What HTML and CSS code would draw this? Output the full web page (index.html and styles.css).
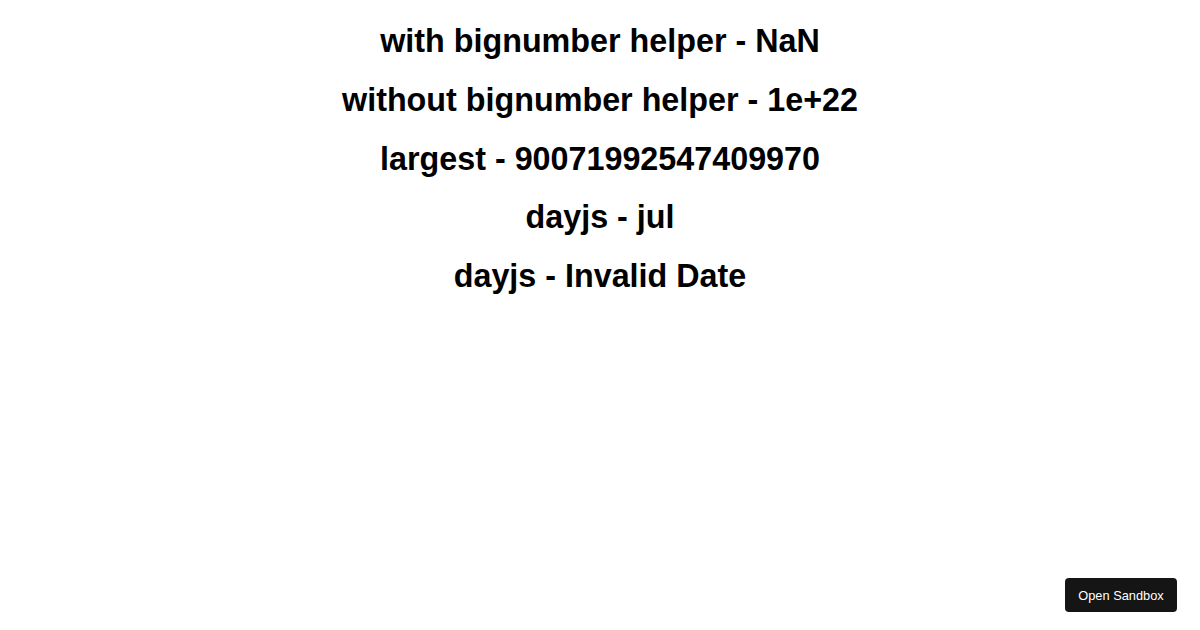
FILE: index.html
```html
<!DOCTYPE html>
<html lang="en">
<head>
    <meta charset="UTF-8">
    <meta name="viewport" content="width=device-width, initial-scale=1.0">
    <title>bignumber</title>
    <link rel="stylesheet" href="styles.css">
</head>
<body>
    <div class="app">
        <h1>with bignumber helper - NaN</h1>
        <h1>without bignumber helper - 1e+22</h1>
        <h1>largest - 90071992547409970</h1>
        <h1>dayjs - jul</h1>
        <h1>dayjs - Invalid Date</h1>
    </div>

    <a class="open-sandbox" href="#">Open Sandbox</a>
</body>
</html>
```

FILE: styles.css
```css
body {
    margin: 0;
    font-family: "Liberation Sans", Arial, sans-serif;
    background: #ffffff;
    color: #000000;
}

.app {
    text-align: center;
}

.app h1 {
    font-size: 32.3px;
    font-weight: bold;
    margin: 21.8px 0;
}

.app h1:first-child {
    margin-top: 23px;
}

/* floating button, bottom right */
.open-sandbox {
    position: fixed;
    right: 23px;
    bottom: 18px;
    width: 112px;
    height: 34px;
    display: flex;
    align-items: center;
    justify-content: center;
    box-sizing: border-box;
    background: #151515;
    color: #ffffff;
    border-radius: 4px;
    font-size: 12.8px;
    text-decoration: none;
}
```
